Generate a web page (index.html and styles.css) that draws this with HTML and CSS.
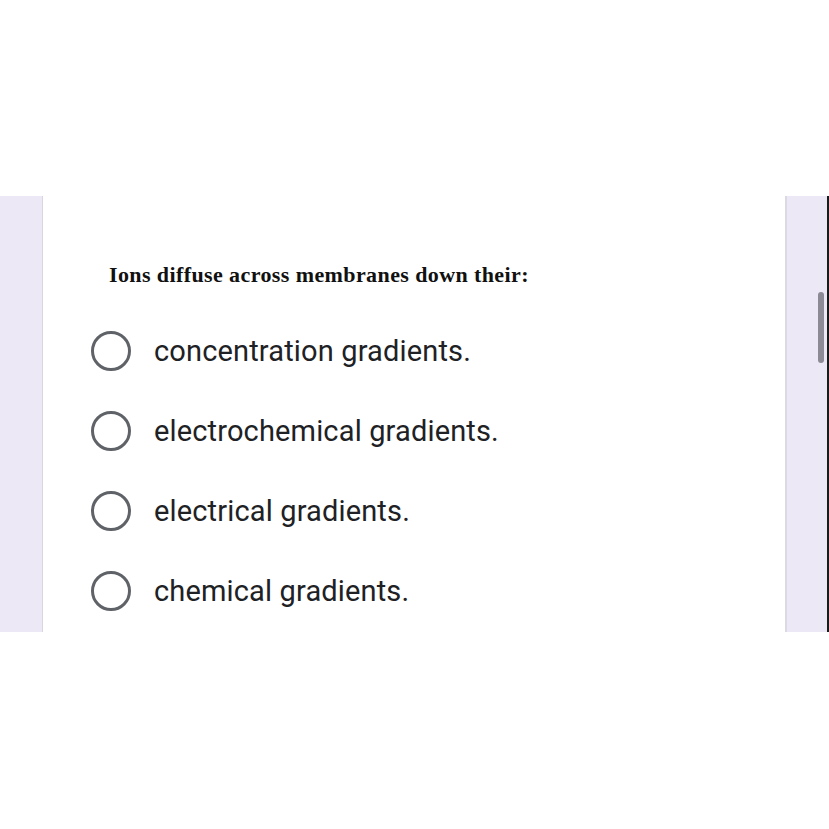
FILE: index.html
```html
<!DOCTYPE html>
<html>
<head>
<meta charset="utf-8">
<link rel="stylesheet" href="styles.css">
</head>
<body>
<div class="top-space"></div>
<div class="band">
  <div class="side side-left"></div>
  <div class="card">
    <p class="question">Ions diffuse across membranes down their:</p>
    <div class="options">
      <label class="option"><span class="radio"></span><span class="opt-text">concentration gradients.</span></label>
      <label class="option"><span class="radio"></span><span class="opt-text">electrochemical gradients.</span></label>
      <label class="option"><span class="radio"></span><span class="opt-text">electrical gradients.</span></label>
      <label class="option"><span class="radio"></span><span class="opt-text">chemical gradients.</span></label>
    </div>
  </div>
  <div class="side side-right"><div class="scrollbar"></div></div>
  <div class="edge"></div>
</div>
</body>
</html>
```
FILE: styles.css
```css
html, body {
  margin: 0;
  padding: 0;
  background: #ffffff;
}
body {
  width: 829px;
  height: 829px;
  overflow: hidden;
}
.top-space {
  height: 196px;
}
.band {
  display: flex;
  height: 436px;
}
.side {
  background: #ece8f6;
}
.side-left {
  width: 42px;
  border-right: 1px solid #d9d5e2;
}
.side-right {
  position: relative;
  width: 40px;
  border-left: 2px solid #dcd8e4;
}
.scrollbar {
  position: absolute;
  left: 31px;
  top: 96px;
  width: 6px;
  height: 71px;
  border-radius: 3px;
  background: #8c8a94;
}
.edge {
  width: 2px;
  background: #1a1a1a;
}
.card {
  flex: 1;
  display: flex;
  flex-direction: column;
  padding: 0 0 0 48px;
  background: #ffffff;
}
.question {
  margin: 0 0 0 18px;
  padding-top: 66px;
  height: 49px;
  font-family: "Liberation Serif", "Times New Roman", serif;
  font-weight: bold;
  font-size: 22px;
  line-height: 26px;
  color: #111111;
  letter-spacing: 0.4px;
}
.options {
  display: flex;
  flex-direction: column;
}
.option {
  display: flex;
  align-items: center;
  height: 80px;
  gap: 23px;
}
.radio {
  flex: none;
  width: 34px;
  height: 34px;
  border: 3px solid #5f6368;
  border-radius: 50%;
}
.opt-text {
  font-family: Roboto, "Noto Sans", sans-serif;
  font-size: 29px;
  line-height: 34px;
  letter-spacing: 0.15px;
  color: #202124;
}
```
